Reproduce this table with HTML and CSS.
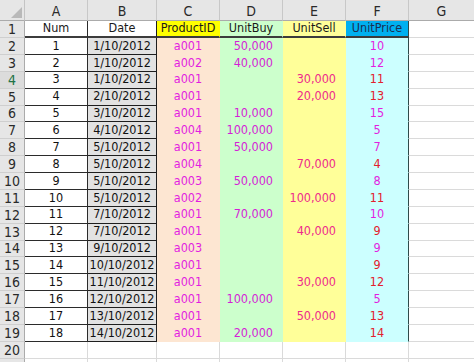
FILE: index.html
```html
<!DOCTYPE html>
<html>
<head>
<meta charset="utf-8">
<link rel="stylesheet" href="styles.css">
</head>
<body>
<div class="sheet">
  <div class="corner"><svg width="24" height="20" viewBox="0 0 24 20"><polygon points="11,18 22,18 22,7" fill="#b9b9b9"/></svg></div>
  <div class="ch">A</div><div class="ch">B</div><div class="ch">C</div><div class="ch">D</div><div class="ch">E</div><div class="ch">F</div><div class="ch">G</div>

  <div class="rh">1</div><div class="c a t">Num</div><div class="c b t">Date</div><div class="c cc t">ProductID</div><div class="c cd t">UnitBuy</div><div class="c ce t">UnitSell</div><div class="c cf t">UnitPrice</div><div class="c g"></div>

  <div class="rh">2</div><div class="c a">1</div><div class="c b">1/10/2012</div><div class="c cc">a001</div><div class="c cd">50,000</div><div class="c ce"></div><div class="c cf m">10</div><div class="c g"></div>
  <div class="rh">3</div><div class="c a">2</div><div class="c b">1/10/2012</div><div class="c cc">a002</div><div class="c cd">40,000</div><div class="c ce"></div><div class="c cf m">12</div><div class="c g"></div>
  <div class="rh sel">4</div><div class="c a">3</div><div class="c b">1/10/2012</div><div class="c cc">a001</div><div class="c cd"></div><div class="c ce">30,000</div><div class="c cf r">11</div><div class="c g"></div>
  <div class="rh">5</div><div class="c a">4</div><div class="c b">2/10/2012</div><div class="c cc">a001</div><div class="c cd"></div><div class="c ce">20,000</div><div class="c cf r">13</div><div class="c g"></div>
  <div class="rh">6</div><div class="c a">5</div><div class="c b">3/10/2012</div><div class="c cc">a001</div><div class="c cd">10,000</div><div class="c ce"></div><div class="c cf m">15</div><div class="c g"></div>
  <div class="rh">7</div><div class="c a">6</div><div class="c b">4/10/2012</div><div class="c cc">a004</div><div class="c cd">100,000</div><div class="c ce"></div><div class="c cf m">5</div><div class="c g"></div>
  <div class="rh">8</div><div class="c a">7</div><div class="c b">5/10/2012</div><div class="c cc">a001</div><div class="c cd">50,000</div><div class="c ce"></div><div class="c cf m">7</div><div class="c g"></div>
  <div class="rh">9</div><div class="c a">8</div><div class="c b">5/10/2012</div><div class="c cc">a004</div><div class="c cd"></div><div class="c ce">70,000</div><div class="c cf r">4</div><div class="c g"></div>
  <div class="rh">10</div><div class="c a">9</div><div class="c b">5/10/2012</div><div class="c cc">a003</div><div class="c cd">50,000</div><div class="c ce"></div><div class="c cf m">8</div><div class="c g"></div>
  <div class="rh">11</div><div class="c a">10</div><div class="c b">5/10/2012</div><div class="c cc">a002</div><div class="c cd"></div><div class="c ce">100,000</div><div class="c cf r">11</div><div class="c g"></div>
  <div class="rh">12</div><div class="c a">11</div><div class="c b">7/10/2012</div><div class="c cc">a001</div><div class="c cd">70,000</div><div class="c ce"></div><div class="c cf m">10</div><div class="c g"></div>
  <div class="rh">13</div><div class="c a">12</div><div class="c b">7/10/2012</div><div class="c cc">a001</div><div class="c cd"></div><div class="c ce">40,000</div><div class="c cf r">9</div><div class="c g"></div>
  <div class="rh">14</div><div class="c a">13</div><div class="c b">9/10/2012</div><div class="c cc">a003</div><div class="c cd"></div><div class="c ce"></div><div class="c cf m">9</div><div class="c g"></div>
  <div class="rh">15</div><div class="c a">14</div><div class="c b">10/10/2012</div><div class="c cc">a001</div><div class="c cd"></div><div class="c ce"></div><div class="c cf r">9</div><div class="c g"></div>
  <div class="rh">16</div><div class="c a">15</div><div class="c b">11/10/2012</div><div class="c cc">a001</div><div class="c cd"></div><div class="c ce">30,000</div><div class="c cf r">12</div><div class="c g"></div>
  <div class="rh">17</div><div class="c a">16</div><div class="c b">12/10/2012</div><div class="c cc">a001</div><div class="c cd">100,000</div><div class="c ce"></div><div class="c cf m">5</div><div class="c g"></div>
  <div class="rh">18</div><div class="c a">17</div><div class="c b">13/10/2012</div><div class="c cc">a001</div><div class="c cd"></div><div class="c ce">50,000</div><div class="c cf r">13</div><div class="c g"></div>
  <div class="rh">19</div><div class="c a">18</div><div class="c b">14/10/2012</div><div class="c cc">a001</div><div class="c cd">20,000</div><div class="c ce"></div><div class="c cf r">14</div><div class="c g"></div>

  <div class="rh">20</div><div class="c"></div><div class="c"></div><div class="c"></div><div class="c"></div><div class="c"></div><div class="c"></div><div class="c g"></div>
  <div class="rh"></div><div class="c"></div><div class="c"></div><div class="c"></div><div class="c"></div><div class="c"></div><div class="c"></div><div class="c g"></div>
</div>
</body>
</html>
```
FILE: styles.css
```css
html, body {
  margin: 0;
  padding: 0;
  background: #ffffff;
  overflow: hidden;
}

.sheet {
  display: grid;
  grid-template-columns: 25px 63px 69px 63px 63px 63px 63px 66px;
  grid-template-rows: 21px 17px repeat(18, 16.89px) 17px 17px;
  font-family: "DejaVu Sans Condensed", "DejaVu Sans", sans-serif;
  font-stretch: condensed;
  font-size: 12.5px;
  color: #111;
}

.sheet > * {
  box-sizing: border-box;
  display: flex;
  align-items: center;
  justify-content: center;
  white-space: nowrap;
  overflow: hidden;
  line-height: 1;
}

.corner {
  background: #e6e6e6;
  border-right: 1px solid #c4c4c4;
  border-bottom: 1px solid #ababab;
}

.corner svg {
  display: block;
}

.ch {
  background: #e6e6e6;
  color: #2a2a2a;
  font-size: 14px;
  border-right: 1px solid #c8c8c8;
  border-bottom: 1px solid #ababab;
  padding-top: 1px;
}

.rh {
  background: #e6e6e6;
  color: #2a2a2a;
  font-size: 14px;
  border-right: 1px solid #ababab;
  border-bottom: 1px solid #cfcfcf;
}

.rh.sel {
  color: #217346;
  background: #dcdcdc;
}

.c {
  border-right: 1px solid #dadada;
  border-bottom: 1px solid #dadada;
}

.a {
  border-right-color: #2b2b2b;
  border-bottom-color: #2b2b2b;
}

.b {
  background: #e2e2e2;
  border-right-color: #1e1e1e;
  border-bottom-color: #1e1e1e;
}

.cc {
  background: #fde6d2;
  color: #e21ee0;
  border-right-color: transparent;
  border-bottom-color: transparent;
}

.cd {
  background: #ccffcc;
  color: #d41ed6;
  border-right-color: transparent;
  border-bottom-color: transparent;
}

.ce {
  background: #ffff99;
  color: #ee2a8c;
  border-right-color: transparent;
  border-bottom-color: transparent;
}

.cd, .ce {
  justify-content: flex-end;
  padding-right: 9px;
}

.cf {
  background: #ccffff;
  border-right-color: #2f4a4a;
  border-bottom-color: transparent;
}

.m {
  color: #e21ee0;
}

.r {
  color: #e3202c;
}

.t {
  background: #ffffff;
  color: #1a1a1a;
  justify-content: center;
  padding-right: 0;
  border-bottom: 2px solid #3c3c3c;
}

.cc.t {
  background: #ffff00;
}

.cd.t {
  background: #ccffcc;
}

.ce.t {
  background: #ffff99;
}

.cf.t {
  background: #00b0f0;
  color: #1b2f52;
}

.g {
  border-right: 1px solid #dadada;
  border-bottom: 1px solid #dadada;
}
```
